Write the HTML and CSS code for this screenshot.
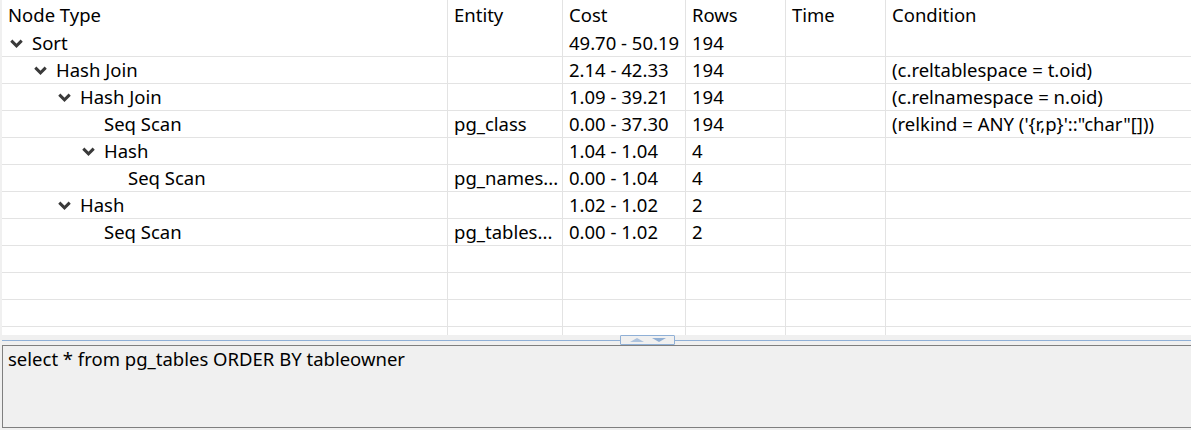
FILE: index.html
```html
<!DOCTYPE html>
<html>
<head>
<meta charset="utf-8">
<link rel="stylesheet" href="styles.css">
</head>
<body>
<div class="app">
  <div class="plan-pane">
    <table class="plan">
      <colgroup>
        <col class="c-node"><col class="c-entity"><col class="c-cost"><col class="c-rows"><col class="c-time"><col class="c-cond">
      </colgroup>
      <thead>
        <tr><th>Node Type</th><th>Entity</th><th>Cost</th><th>Rows</th><th>Time</th><th>Condition</th></tr>
      </thead>
      <tbody>
        <tr>
          <td><div class="node l0"><span class="tog"><svg width="13" height="9" viewBox="0 0 13 9"><polyline points="1.3,1.6 6.5,6.8 11.7,1.6"/></svg></span>Sort</div></td>
          <td></td><td>49.70 - 50.19</td><td>194</td><td></td><td></td>
        </tr>
        <tr>
          <td><div class="node l1"><span class="tog"><svg width="13" height="9" viewBox="0 0 13 9"><polyline points="1.3,1.6 6.5,6.8 11.7,1.6"/></svg></span>Hash Join</div></td>
          <td></td><td>2.14 - 42.33</td><td>194</td><td></td><td>(c.reltablespace = t.oid)</td>
        </tr>
        <tr>
          <td><div class="node l2"><span class="tog"><svg width="13" height="9" viewBox="0 0 13 9"><polyline points="1.3,1.6 6.5,6.8 11.7,1.6"/></svg></span>Hash Join</div></td>
          <td></td><td>1.09 - 39.21</td><td>194</td><td></td><td>(c.relnamespace = n.oid)</td>
        </tr>
        <tr>
          <td><div class="node l3"><span class="tog"></span>Seq Scan</div></td>
          <td>pg_class</td><td>0.00 - 37.30</td><td>194</td><td></td><td>(relkind = ANY ('{r,p}'::"char"[]))</td>
        </tr>
        <tr>
          <td><div class="node l3"><span class="tog"><svg width="13" height="9" viewBox="0 0 13 9"><polyline points="1.3,1.6 6.5,6.8 11.7,1.6"/></svg></span>Hash</div></td>
          <td></td><td>1.04 - 1.04</td><td>4</td><td></td><td></td>
        </tr>
        <tr>
          <td><div class="node l4"><span class="tog"></span>Seq Scan</div></td>
          <td>pg_names...</td><td>0.00 - 1.04</td><td>4</td><td></td><td></td>
        </tr>
        <tr>
          <td><div class="node l2"><span class="tog"><svg width="13" height="9" viewBox="0 0 13 9"><polyline points="1.3,1.6 6.5,6.8 11.7,1.6"/></svg></span>Hash</div></td>
          <td></td><td>1.02 - 1.02</td><td>2</td><td></td><td></td>
        </tr>
        <tr>
          <td><div class="node l3"><span class="tog"></span>Seq Scan</div></td>
          <td>pg_tables...</td><td>0.00 - 1.02</td><td>2</td><td></td><td></td>
        </tr>
        <tr class="empty"><td></td><td></td><td></td><td></td><td></td><td></td></tr>
        <tr class="empty"><td></td><td></td><td></td><td></td><td></td><td></td></tr>
        <tr class="empty"><td></td><td></td><td></td><td></td><td></td><td></td></tr>
        <tr class="empty"><td></td><td></td><td></td><td></td><td></td><td></td></tr>
      </tbody>
    </table>
  </div>
  <div class="splitter">
    <div class="sash-line"></div>
    <div class="sash-handle">
      <span class="arrow-up"></span>
      <span class="arrow-down"></span>
    </div>
    <div class="sash-line grow"></div>
  </div>
  <div class="query">select * from pg_tables ORDER BY tableowner</div>
</div>
</body>
</html>
```

FILE: styles.css
```css
html, body {
  margin: 0;
  padding: 0;
  background: #f0f0f0;
  overflow: hidden;
}
body {
  width: 1191px;
  height: 430px;
  font-family: "Noto Sans", "Open Sans", sans-serif;
  font-size: 18.5px;
  color: #000;
}
.app {
  display: flex;
  flex-direction: column;
  padding-left: 2px;
  height: 430px;
  box-sizing: border-box;
}
.plan-pane {
  height: 335px;
  background: #fff;
  overflow: hidden;
}
.plan {
  border-collapse: separate;
  border-spacing: 0;
  table-layout: fixed;
  width: 1189px;
}
.c-node { width: 446px; }
.c-entity { width: 115px; }
.c-cost { width: 123px; }
.c-rows { width: 100px; }
.c-time { width: 100px; }
.c-cond { width: 305px; }
.plan th, .plan td {
  box-sizing: border-box;
  padding: 0 0 0 6px;
  text-align: left;
  font-weight: normal;
  white-space: nowrap;
  overflow: hidden;
  border-right: 1px solid #e3e3e3;
}
.plan th:last-child, .plan td:last-child { border-right: none; }
.plan th {
  height: 30px;
  line-height: 30px;
}
.plan td {
  height: 27px;
  line-height: 26px;
  border-bottom: 1px solid #e3e3e3;
}
.node {
  display: flex;
  align-items: center;
  height: 26px;
}
.l1 { padding-left: 24px; }
.l2 { padding-left: 48px; }
.l3 { padding-left: 72px; }
.l4 { padding-left: 96px; }
.tog {
  width: 24px;
  flex: none;
  display: flex;
  align-items: center;
  padding-left: 2px;
  box-sizing: border-box;
}
.tog svg { flex: none; }
.tog svg polyline {
  fill: none;
  stroke: #3a3a3a;
  stroke-width: 3;
}
.splitter {
  display: flex;
  height: 10px;
  align-items: flex-start;
}
.sash-line {
  width: 618px;
  height: 1px;
  margin-top: 5px;
  background: #90b0d6;
}
.sash-line.grow { flex: 1; width: auto; }
.sash-handle {
  width: 55px;
  height: 10px;
  box-sizing: border-box;
  border: 1px solid #90b0d6;
  border-radius: 1px;
  display: flex;
  align-items: center;
  justify-content: center;
  gap: 8px;
}
.arrow-up {
  width: 0; height: 0;
  border-left: 7px solid transparent;
  border-right: 7px solid transparent;
  border-bottom: 4px solid #adc3de;
}
.arrow-down {
  width: 0; height: 0;
  border-left: 7px solid transparent;
  border-right: 7px solid transparent;
  border-top: 4px solid #91afd4;
}
.query {
  height: 83px;
  box-sizing: border-box;
  border: 1px solid #7f7f7f;
  border-right: none;
  background: #f0f0f0;
  padding: 1px 0 0 5px;
  line-height: 24px;
  white-space: nowrap;
}
```
